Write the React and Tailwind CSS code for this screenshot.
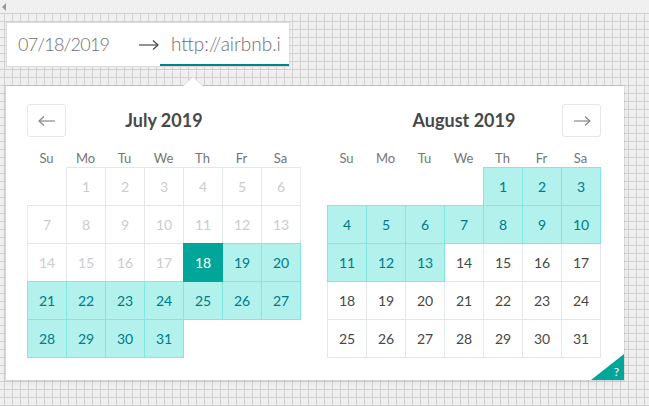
import React from 'react';

const WEEKDAYS = ['Su', 'Mo', 'Tu', 'We', 'Th', 'Fr', 'Sa'];

// build rows of 7, null where the month has no day
function buildWeeks(offset, total) {
  const cells = [];
  for (let i = 0; i < offset; i++) cells.push(null);
  for (let d = 1; d <= total; d++) cells.push(d);
  while (cells.length % 7) cells.push(null);
  const weeks = [];
  for (let i = 0; i < cells.length; i += 7) weeks.push(cells.slice(i, i + 7));
  return weeks;
}

const months = [
  {
    title: 'July 2019',
    offset: 1,
    days: 31,
    status: (d) => (d < 18 ? 'blocked' : d === 18 ? 'start' : 'span'),
    nav: 'left',
  },
  {
    title: 'August 2019',
    offset: 4,
    days: 31,
    status: (d) => (d <= 13 ? 'span' : 'normal'),
    nav: 'right',
  },
];

const cellStyles = {
  blocked: 'border-[#e4e7e7] text-[#cacccd] bg-white',
  normal: 'border-[#e4e7e7] text-[#484848] bg-white',
  span: 'relative z-10 border-[#80e8e0] text-[#007a87] bg-[#b2f1ec]',
  start: 'relative z-20 border-[#00a699] text-white bg-[#00a699]',
};

function Arrow({ dir, color = '#82888a', width = 18 }) {
  return (
    <svg width={width} height="12" viewBox={`0 0 ${width} 12`} fill="none" stroke={color} strokeWidth="1.2">
      {dir === 'left' ? (
        <>
          <path d={`M1 6H${width - 1}`} />
          <path d="M6 1.5L1 6L6 10.5" />
        </>
      ) : (
        <>
          <path d={`M1 6H${width - 1}`} />
          <path d={`M${width - 6} 1.5L${width - 1} 6L${width - 6} 10.5`} />
        </>
      )}
    </svg>
  );
}

function NavButton({ dir }) {
  return (
    <button
      className={`absolute top-0 ${dir === 'left' ? 'left-0' : 'right-0'} w-[39px] h-[33px] flex items-center justify-center bg-white border border-[#e4e7e7] rounded-[3px]`}
    >
      <Arrow dir={dir} />
    </button>
  );
}

function Month({ month }) {
  const weeks = buildWeeks(month.offset, month.days);
  return (
    <div className="w-[274px] flex flex-col">
      <div className="relative h-[33px] flex items-center justify-center">
        <NavButton dir={month.nav} />
        <span className="text-[18px] font-bold text-[#484848] leading-none pb-[1px]">{month.title}</span>
      </div>

      <div className="flex mt-[13px] h-[17px]">
        {WEEKDAYS.map((w) => (
          <div key={w} className="w-[39px] text-center text-[13px] leading-[17px] text-[#757575]">
            {w}
          </div>
        ))}
      </div>

      <div className="flex flex-col">
        {weeks.map((week, wi) => (
          <div key={wi} className="flex -mt-px first:mt-0">
            {week.map((d, di) =>
              d === null ? (
                <div key={di} className="w-[40px] h-[39px] -ml-px first:ml-0" />
              ) : (
                <div
                  key={di}
                  className={`w-[40px] h-[39px] -ml-px first:ml-0 border flex items-center justify-center text-[14px] ${cellStyles[month.status(d)]}`}
                >
                  {d}
                </div>
              )
            )}
          </div>
        ))}
      </div>
    </div>
  );
}

export default function App() {
  return (
    <div className="w-full h-[406px] overflow-hidden bg-[#f0f0f0] font-[family-name:Lato,sans-serif]">
      {/* top strip */}
      <div className="h-[13px] flex items-center pl-[2px]">
        <div className="w-0 h-0 border-y-[4px] border-y-transparent border-r-[4px] border-r-[#9a9a9a]" />
      </div>

      {/* grid canvas */}
      <div className="h-[393px] pl-[6px] pt-[9px] bg-[linear-gradient(to_right,#d0d0d0_1px,transparent_1px),linear-gradient(to_bottom,#d0d0d0_1px,transparent_1px)] bg-[size:8px_8px] bg-[position:4px_0]">
        {/* inputs */}
        <div className="w-[284px] h-[45px] flex bg-white border border-[#dbdbdb]">
          <div className="w-[129px] h-full flex items-center pl-[11px] text-[18px] tracking-[-0.8px] font-light text-[#6f6f6f] whitespace-nowrap overflow-hidden">
            07/18/2019
          </div>
          <div className="w-[24px] h-full flex items-center justify-center">
            <Arrow dir="right" color="#484848" width={21} />
          </div>
          <div className="relative w-[129px] h-full flex items-center pl-[11px] text-[19px] font-light text-[#6f6f6f] whitespace-nowrap overflow-hidden">
            http://airbnb.i
            <div className="absolute left-0 right-0 bottom-0 h-[2px] bg-[#008489]" />
          </div>
        </div>

        {/* picker */}
        <div className="relative mt-[19px] w-[618px] h-[294px] bg-white shadow-[0_2px_6px_rgba(0,0,0,0.05),0_0_0_1px_rgba(0,0,0,0.07)]">
          <svg className="absolute -top-[10px] left-[176px]" width="22" height="11" viewBox="0 0 22 11">
            <path d="M0 11L11 0.5L22 11Z" fill="#fff" />
            <path d="M0.5 10.5L11 0.7L21.5 10.5" fill="none" stroke="#dbdbdb" strokeWidth="1" />
          </svg>

          <div className="flex pl-[21px] pt-[18px] gap-[26px]">
            {months.map((m) => (
              <Month key={m.title} month={m} />
            ))}
          </div>

          <div className="absolute right-0 bottom-0 z-30 w-0 h-0 border-t-[26px] border-t-transparent border-r-[33px] border-r-[#00a699]" />
          <span className="absolute right-[5px] bottom-[2px] z-30 text-[12px] leading-none text-white">?</span>
        </div>
      </div>
    </div>
  );
}
